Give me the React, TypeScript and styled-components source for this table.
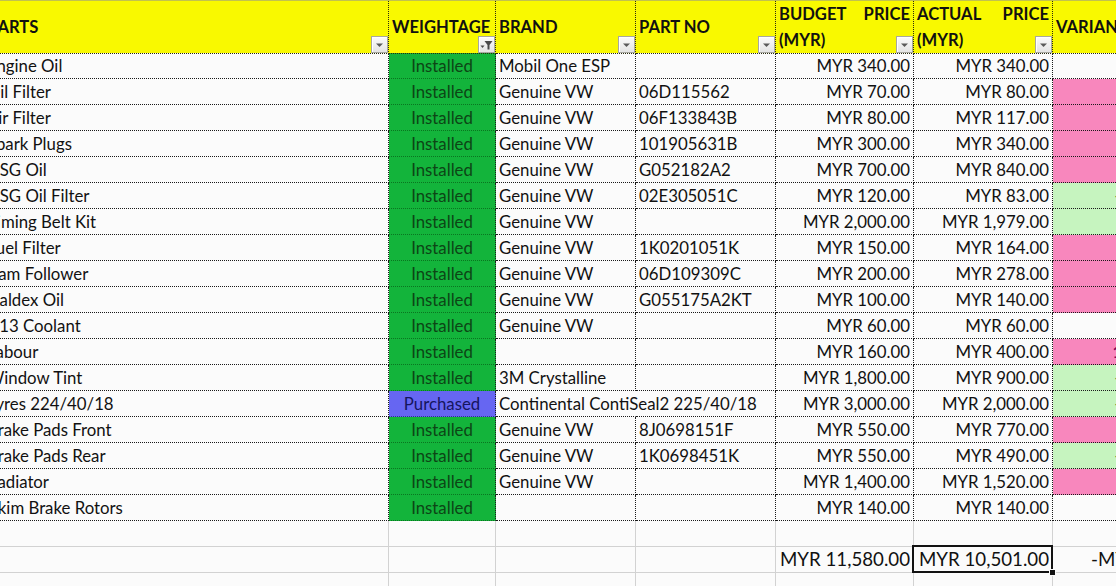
import React from "react";
import styled, { createGlobalStyle } from "styled-components";

const GlobalStyle = createGlobalStyle`
  html, body {
    margin: 0;
    padding: 0;
    overflow: hidden;
    background: #fbfbfb;
  }
  body {
    font-family: Lato, "Liberation Sans", sans-serif;
  }
`;

const COLS = "405px 107px 140px 140px 138px 139px 163px";

const Sheet = styled.div`
  margin-left: -16px;
  width: max-content;
  border-top: 1px solid #c2c24e;
  font-family: Lato, "Liberation Sans", sans-serif;
  font-size: 16.8px;
  color: #111;
`;

type RowKind = "header" | "data" | "plain";

const Row = styled.div<{ $kind: RowKind }>`
  display: grid;
  grid-template-columns: ${COLS};
  height: ${(p) => (p.$kind === "header" ? 52 : 26)}px;
  background: ${(p) => (p.$kind === "header" ? "#f9f900" : "#fbfbfb")};
`;

const HeaderCell = styled.div<{ $first?: boolean }>`
  position: relative;
  box-sizing: border-box;
  display: flex;
  align-items: center;
  padding: 0 3px 0 ${(p) => (p.$first ? 4 : 3)}px;
  border-right: 1px dotted #2a2a10;
  border-bottom: 1px dotted #2a2a10;
  font-weight: 700;
  font-size: 16.6px;
  white-space: nowrap;
  overflow: visible;
`;

const HeaderWrap = styled.span`
  display: block;
  width: 100%;
  white-space: normal;
  text-align: justify;
  text-align-last: left;
  line-height: 26px;
`;

const FilterBtn = styled.span`
  position: absolute;
  right: 0;
  bottom: 0;
  width: 17px;
  height: 17px;
  box-sizing: border-box;
  border: 1px solid #a8a8a0;
  background: linear-gradient(#fbfbfb, #e4e4e4);
  box-shadow: inset 1px 1px 0 #ffffff;
  display: flex;
  align-items: center;
  justify-content: center;
`;

type Align = "left" | "center" | "right";
type Fill = "none" | "installed" | "purchased" | "bad" | "good";

const fills: Record<Fill, { bg: string; fg: string; line: string }> = {
  none: { bg: "transparent", fg: "#111", line: "#1a1a1a" },
  installed: { bg: "#13b43b", fg: "#0d4516", line: "rgba(0,40,0,0.45)" },
  purchased: { bg: "#6666f2", fg: "#15155e", line: "rgba(0,0,40,0.5)" },
  bad: { bg: "#f887bd", fg: "#7a0a5a", line: "#1a1a1a" },
  good: { bg: "#c6f4bf", fg: "#1f5a1f", line: "#1a1a1a" },
};

const Cell = styled.div<{
  $align?: Align;
  $fill?: Fill;
  $open?: boolean;
  $bold?: boolean;
}>`
  box-sizing: border-box;
  display: flex;
  align-items: center;
  justify-content: ${(p) =>
    p.$align === "right" ? "flex-end" : p.$align === "center" ? "center" : "flex-start"};
  padding: 0 3px 1px 3px;
  white-space: nowrap;
  overflow: ${(p) => (p.$open ? "visible" : "hidden")};
  background: ${(p) => fills[p.$fill || "none"].bg};
  color: ${(p) => fills[p.$fill || "none"].fg};
  font-weight: ${(p) => (p.$bold ? 700 : 400)};
  border-bottom: 1px dotted ${(p) => fills[p.$fill || "none"].line};
  border-right: ${(p) => (p.$open ? "1px solid transparent" : "1px dotted #1a1a1a")};
`;

const GridCell = styled.div<{ $align?: Align; $big?: boolean; $padLeft?: number }>`
  position: relative;
  box-sizing: border-box;
  display: flex;
  align-items: center;
  justify-content: ${(p) => (p.$align === "right" ? "flex-end" : "flex-start")};
  padding: 0 3px 1px ${(p) => p.$padLeft ?? 3}px;
  white-space: nowrap;
  overflow: visible;
  font-size: ${(p) => (p.$big ? "18.7px" : "inherit")};
  border-right: 1px solid #d2d2d2;
  border-bottom: 1px solid #d2d2d2;
`;

const Selected = styled(GridCell)`
  &::after {
    content: "";
    position: absolute;
    top: -2px;
    left: -2px;
    right: -1px;
    bottom: -1px;
    border: 2px solid #121212;
    pointer-events: none;
    z-index: 2;
  }
  &::before {
    content: "";
    position: absolute;
    right: -4px;
    bottom: -4px;
    width: 5px;
    height: 5px;
    background: #121212;
    border: 1px solid #fbfbfb;
    z-index: 3;
  }
`;

const Arrow = () => (
  <svg width="9" height="6" viewBox="0 0 9 6">
    <path d="M1 1.5 L8 1.5 L4.5 5 Z" fill="#5a5a5a" />
  </svg>
);

const Funnel = () => (
  <svg width="13" height="12" viewBox="0 0 13 12">
    <path d="M0.5 6.5 L4.5 6.5 L2.5 9 Z" fill="#4a4a4a" />
    <path d="M4.5 2 L12.5 2 L9.5 6 L9.5 10.5 L7.5 10.5 L7.5 6 Z" fill="#4a4a4a" />
  </svg>
);

type Variance = "none" | "bad" | "good";
type Item = [string, string, string, string, string, string, Variance, string];

const items: Item[] = [
  ["Engine Oil", "Installed", "Mobil One ESP", "", "MYR 340.00", "MYR 340.00", "none", "0%"],
  ["Oil Filter", "Installed", "Genuine VW", "06D115562", "MYR 70.00", "MYR 80.00", "bad", "14%"],
  ["Air Filter", "Installed", "Genuine VW", "06F133843B", "MYR 80.00", "MYR 117.00", "bad", "46%"],
  ["Spark Plugs", "Installed", "Genuine VW", "101905631B", "MYR 300.00", "MYR 340.00", "bad", "13%"],
  ["DSG Oil", "Installed", "Genuine VW", "G052182A2", "MYR 700.00", "MYR 840.00", "bad", "20%"],
  ["DSG Oil Filter", "Installed", "Genuine VW", "02E305051C", "MYR 120.00", "MYR 83.00", "good", "-31%"],
  ["Timing Belt Kit", "Installed", "Genuine VW", "", "MYR 2,000.00", "MYR 1,979.00", "good", "-1%"],
  ["Fuel Filter", "Installed", "Genuine VW", "1K0201051K", "MYR 150.00", "MYR 164.00", "bad", "9%"],
  ["Cam Follower", "Installed", "Genuine VW", "06D109309C", "MYR 200.00", "MYR 278.00", "bad", "39%"],
  ["Haldex Oil", "Installed", "Genuine VW", "G055175A2KT", "MYR 100.00", "MYR 140.00", "bad", "40%"],
  ["G13 Coolant", "Installed", "Genuine VW", "", "MYR 60.00", "MYR 60.00", "none", "0%"],
  ["Labour", "Installed", "", "", "MYR 160.00", "MYR 400.00", "bad", "150%"],
  ["Window Tint", "Installed", "3M Crystalline", "", "MYR 1,800.00", "MYR 900.00", "good", "-50%"],
  ["Tyres 224/40/18", "Purchased", "Continental ContiSeal2 225/40/18", "", "MYR 3,000.00", "MYR 2,000.00", "good", "-33%"],
  ["Brake Pads Front", "Installed", "Genuine VW", "8J0698151F", "MYR 550.00", "MYR 770.00", "bad", "40%"],
  ["Brake Pads Rear", "Installed", "Genuine VW", "1K0698451K", "MYR 550.00", "MYR 490.00", "good", "-11%"],
  ["Radiator", "Installed", "Genuine VW", "", "MYR 1,400.00", "MYR 1,520.00", "bad", "9%"],
  ["Xkim Brake Rotors", "Installed", "", "", "MYR 140.00", "MYR 140.00", "none", "0%"],
];

const EmptyRow = () => (
  <Row $kind="plain">
    {Array.from({ length: 7 }).map((_, i) => (
      <GridCell key={i} />
    ))}
  </Row>
);

export default function App() {
  return (
    <>
      <GlobalStyle />
      <Sheet>
        <Row $kind="header">
          <HeaderCell $first>
            PARTS
            <FilterBtn><Arrow /></FilterBtn>
          </HeaderCell>
          <HeaderCell>
            WEIGHTAGE
            <FilterBtn><Funnel /></FilterBtn>
          </HeaderCell>
          <HeaderCell>
            BRAND
            <FilterBtn><Arrow /></FilterBtn>
          </HeaderCell>
          <HeaderCell>
            PART NO
            <FilterBtn><Arrow /></FilterBtn>
          </HeaderCell>
          <HeaderCell>
            <HeaderWrap>BUDGET PRICE (MYR)</HeaderWrap>
            <FilterBtn><Arrow /></FilterBtn>
          </HeaderCell>
          <HeaderCell>
            <HeaderWrap>ACTUAL PRICE (MYR)</HeaderWrap>
            <FilterBtn><Arrow /></FilterBtn>
          </HeaderCell>
          <HeaderCell>
            VARIANCE
            <FilterBtn><Arrow /></FilterBtn>
          </HeaderCell>
        </Row>
        {items.map(([part, status, brand, partNo, budget, actual, v, pct]) => {
          const overflowBrand = brand.length > 18 && partNo === "";
          return (
            <Row $kind="data" key={part}>
              <Cell>{part}</Cell>
              <Cell $align="center" $fill={status === "Installed" ? "installed" : "purchased"}>
                {status}
              </Cell>
              <Cell $open={overflowBrand}>{brand}</Cell>
              <Cell>{partNo}</Cell>
              <Cell $align="right">{budget}</Cell>
              <Cell $align="right">{actual}</Cell>
              <Cell $align="center" $fill={v} $bold={v === "bad"}>
                {pct}
              </Cell>
            </Row>
          );
        })}
        <EmptyRow />
        <Row $kind="plain">
          <GridCell />
          <GridCell />
          <GridCell />
          <GridCell />
          <GridCell $align="right" $big>MYR 11,580.00</GridCell>
          <Selected $align="right" $big>MYR 10,501.00</Selected>
          <GridCell $big $padLeft={38}>-MYR 1,079.00</GridCell>
        </Row>
        <EmptyRow />
      </Sheet>
    </>
  );
}
